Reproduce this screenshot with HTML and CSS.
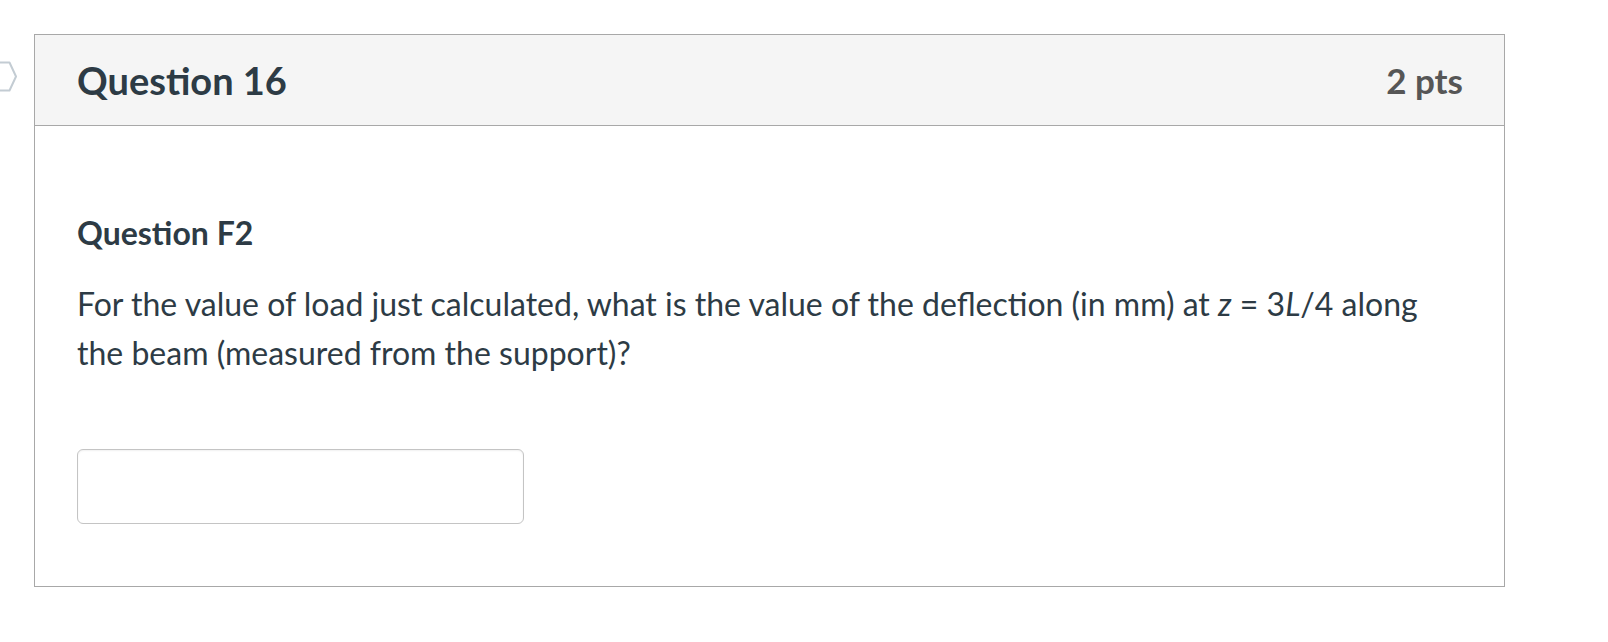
FILE: index.html
```html
<!DOCTYPE html>
<html lang="en">
<head>
<meta charset="utf-8">
<title>Question 16</title>
<link rel="stylesheet" href="styles.css">
</head>
<body>
<div class="page">
  <svg class="flag" width="20" height="32" viewBox="0 0 20 32" aria-hidden="true">
    <polygon points="-12,1.5 9.5,1.5 16,15.5 9.5,29.5 -12,29.5" fill="#ffffff" stroke="#c3ccd3" stroke-width="2" stroke-linejoin="round"/>
  </svg>
  <div class="question">
    <div class="q-header">
      <span class="q-name">Question 16</span>
      <span class="q-points">2 pts</span>
    </div>
    <div class="q-body">
      <div class="q-title">Question F2</div>
      <p class="q-text">For the value of load just calculated, what is the value of the deflection (in mm) at <i>z</i> = 3<i>L</i>/4 along the beam (measured from the support)?</p>
      <input class="q-input" type="text" aria-label="Answer">
    </div>
  </div>
</div>
</body>
</html>
```
FILE: styles.css
```css
html, body {
  margin: 0;
  padding: 0;
  background: #ffffff;
}
body {
  font-family: Lato, "Open Sans", "Liberation Sans", sans-serif;
  color: #2d3b45;
}
.page {
  position: relative;
  padding: 34px 0 0 34px;
}
.flag {
  position: absolute;
  left: 0;
  top: 61px;
}
.question {
  width: 1469px;
  border: 1px solid #a8a8a8;
  box-sizing: content-box;
}
.q-header {
  height: 90px;
  background: #f5f5f5;
  border-bottom: 1px solid #a8a8a8;
  display: flex;
  align-items: center;
  justify-content: space-between;
  padding: 0 41px 0 42px;
}
.q-name {
  font-size: 38px;
  font-weight: 700;
  color: #2d3b45;
}
.q-points {
  font-size: 35px;
  font-weight: 700;
  color: #565656;
}
.q-body {
  padding: 84px 41px 62px 42px;
}
.q-title {
  font-size: 32px;
  font-weight: 700;
  line-height: 46px;
  margin: 0 0 23px;
}
.q-text {
  font-size: 32px;
  line-height: 49px;
  margin: 0 0 72px;
}
.q-text i {
  font-style: italic;
}
.q-input {
  display: block;
  width: 447px;
  height: 75px;
  box-sizing: border-box;
  border: 1px solid #c4c4c4;
  border-radius: 6px;
  box-shadow: inset 0 1px 2px rgba(0,0,0,0.06);
  background: #ffffff;
  margin: 0;
  padding: 0 12px;
  font-family: inherit;
  font-size: 29px;
}
```
